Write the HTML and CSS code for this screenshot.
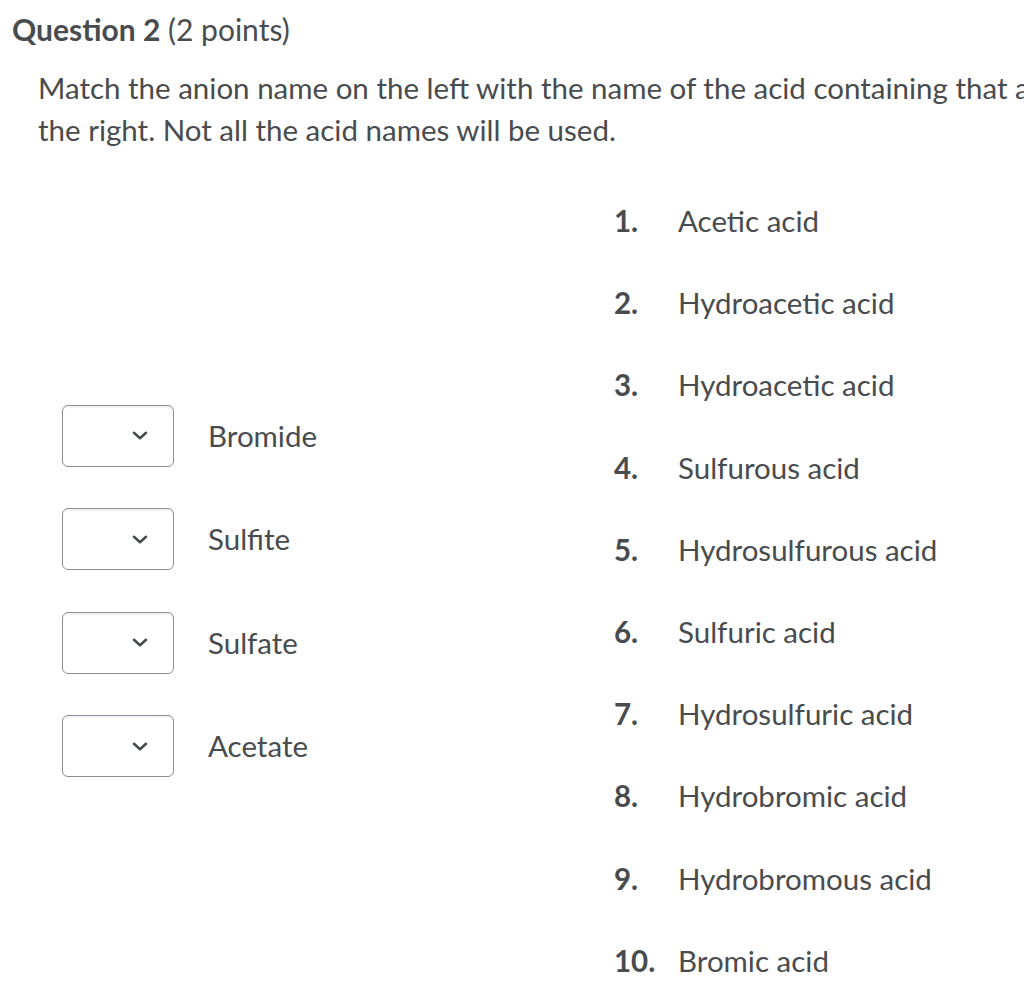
FILE: index.html
```html
<!DOCTYPE html>
<html lang="en">
<head>
    <meta charset="UTF-8">
    <meta name="viewport" content="width=device-width, initial-scale=1.0">
    <title>Question 2</title>
    <link rel="stylesheet" href="styles.css">
</head>
<body>

    <!-- Question header -->
    <h1 class="question-title"><strong>Question 2</strong> (2 points)</h1>

    <p class="question-text">Match the anion name on the left with the name of the acid containing that anion on<br>the right. Not all the acid names will be used.</p>

    <div class="match">
        <!-- Anions with dropdowns -->
        <div class="anions">
            <div class="anion">
                <div class="dropdown" role="combobox" tabindex="0">
                    <svg width="16" height="9" viewBox="0 0 16 9"><path d="M2 1.8 L8 7.2 L14 1.8" fill="none" stroke="#494c4e" stroke-width="2.6" stroke-linecap="round" stroke-linejoin="round"/></svg>
                </div>
                <span class="anion-name">Bromide</span>
            </div>
            <div class="anion">
                <div class="dropdown" role="combobox" tabindex="0">
                    <svg width="16" height="9" viewBox="0 0 16 9"><path d="M2 1.8 L8 7.2 L14 1.8" fill="none" stroke="#494c4e" stroke-width="2.6" stroke-linecap="round" stroke-linejoin="round"/></svg>
                </div>
                <span class="anion-name">Sulfite</span>
            </div>
            <div class="anion">
                <div class="dropdown" role="combobox" tabindex="0">
                    <svg width="16" height="9" viewBox="0 0 16 9"><path d="M2 1.8 L8 7.2 L14 1.8" fill="none" stroke="#494c4e" stroke-width="2.6" stroke-linecap="round" stroke-linejoin="round"/></svg>
                </div>
                <span class="anion-name">Sulfate</span>
            </div>
            <div class="anion">
                <div class="dropdown" role="combobox" tabindex="0">
                    <svg width="16" height="9" viewBox="0 0 16 9"><path d="M2 1.8 L8 7.2 L14 1.8" fill="none" stroke="#494c4e" stroke-width="2.6" stroke-linecap="round" stroke-linejoin="round"/></svg>
                </div>
                <span class="anion-name">Acetate</span>
            </div>
        </div>

        <!-- Acid names -->
        <ol class="acids">
            <li><span class="num">1.</span>Acetic acid</li>
            <li><span class="num">2.</span>Hydroacetic acid</li>
            <li><span class="num">3.</span>Hydroacetic acid</li>
            <li><span class="num">4.</span>Sulfurous acid</li>
            <li><span class="num">5.</span>Hydrosulfurous acid</li>
            <li><span class="num">6.</span>Sulfuric acid</li>
            <li><span class="num">7.</span>Hydrosulfuric acid</li>
            <li><span class="num">8.</span>Hydrobromic acid</li>
            <li><span class="num">9.</span>Hydrobromous acid</li>
            <li><span class="num">10.</span>Bromic acid</li>
        </ol>
    </div>

</body>
</html>
```

FILE: styles.css
```css
* {
    margin: 0;
    padding: 0;
    box-sizing: border-box;
}

body {
    font-family: 'Lato', 'Open Sans', sans-serif;
    color: #494c4e;
    background: #ffffff;
    font-size: 29.5px;
    overflow: hidden;
}

/* Header */
.question-title {
    font-size: 30px;
    font-weight: normal;
    line-height: 36px;
    margin: 11px 0 0 12px;
}

.question-title strong {
    font-weight: bold;
}

.question-text {
    margin: 20px 0 0 38px;
    line-height: 42px;
    white-space: nowrap;
}

/* Matching area */
.match {
    display: grid;
    grid-template-columns: 552px auto;
    align-items: center;
    margin: 29px 0 0 62px;
}

.anions {
    display: flex;
    flex-direction: column;
    gap: 41.5px;
}

.anion {
    display: flex;
    align-items: center;
    gap: 34px;
}

.dropdown {
    width: 112px;
    height: 62px;
    border: 1px solid #8c8e91;
    border-radius: 6px;
    background: #ffffff;
    box-shadow: inset 0 2px 0 0 rgba(185, 194, 208, 0.2);
    display: flex;
    align-items: center;
    justify-content: flex-end;
    padding-right: 25px;
}

.anion-name {
    line-height: 42px;
}

.acids {
    list-style: none;
}

.acids li {
    display: flex;
    height: 82.2px;
    align-items: center;
    line-height: 42px;
}

.num {
    width: 64px;
    font-weight: bold;
}
```
